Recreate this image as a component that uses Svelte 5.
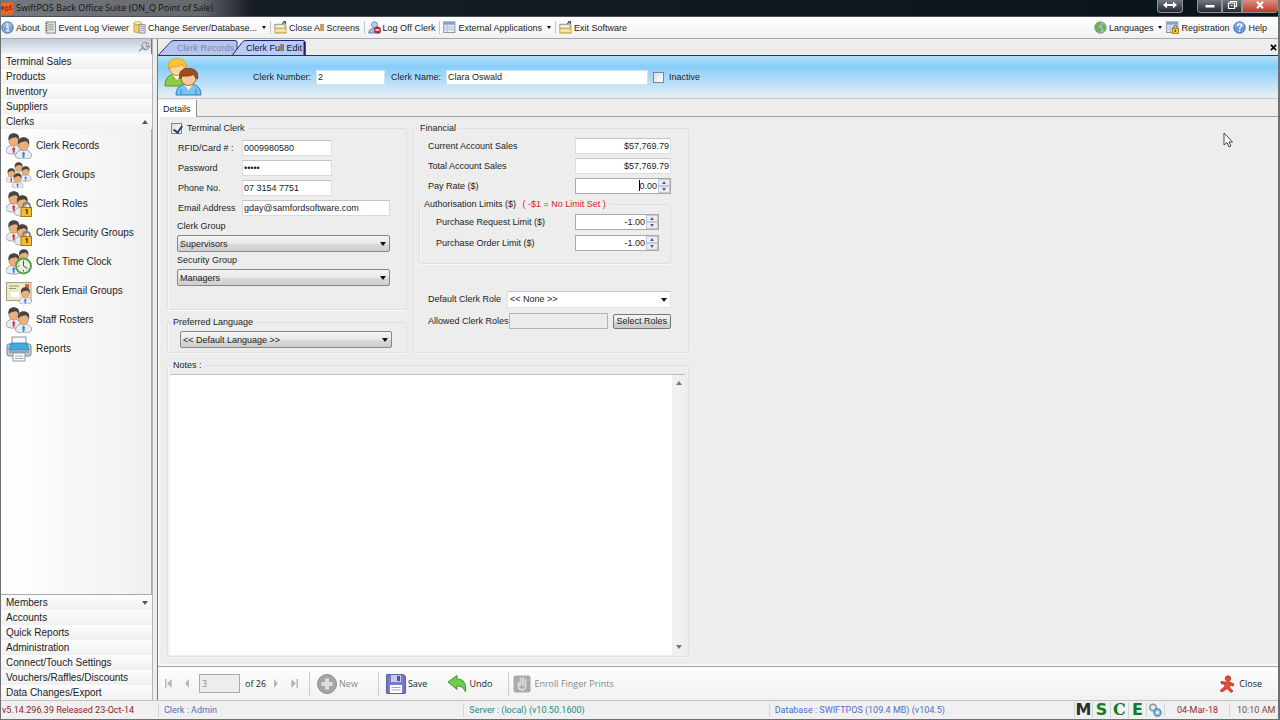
<script>
	let clerk = $state({
		number: '2',
		name: 'Clara Oswald',
		inactive: false,
		terminal: true,
		card: '0009980580',
		password: '12345',
		phone: '07 3154 7751',
		email: 'gday@samfordsoftware.com',
		payRate: '0.00',
		requestLimit: '-1.00',
		orderLimit: '-1.00',
		notes: ''
	});

	const topSections = ['Terminal Sales', 'Products', 'Inventory', 'Suppliers', 'Clerks'];
	const bottomSections = [
		'Members',
		'Accounts',
		'Quick Reports',
		'Administration',
		'Connect/Touch Settings',
		'Vouchers/Raffles/Discounts',
		'Data Changes/Export'
	];
	const clerkItems = [
		{ label: 'Clerk Records', icon: 'pair' },
		{ label: 'Clerk Groups', icon: 'group' },
		{ label: 'Clerk Roles', icon: 'lock' },
		{ label: 'Clerk Security Groups', icon: 'lock' },
		{ label: 'Clerk Time Clock', icon: 'clock' },
		{ label: 'Clerk Email Groups', icon: 'mail' },
		{ label: 'Staff Rosters', icon: 'pair' },
		{ label: 'Reports', icon: 'printer' }
	];
	const menuLeft = [
		{ label: 'About', icon: 'info' },
		{ label: 'Event Log Viewer', icon: 'log' },
		{ label: 'Change Server/Database...', icon: 'database', arrow: true, sep: true },
		{ label: 'Close All Screens', icon: 'folder', sep: true },
		{ label: 'Log Off Clerk', icon: 'logoff', sep: true },
		{ label: 'External Applications', icon: 'window', arrow: true, sep: true },
		{ label: 'Exit Software', icon: 'folder' }
	];
	const menuRight = [
		{ label: 'Languages', icon: 'globe', arrow: true },
		{ label: 'Registration', icon: 'register' },
		{ label: 'Help', icon: 'help' }
	];

	function step(field, amount) {
		clerk[field] = (parseFloat(clerk[field]) + amount).toFixed(2);
	}
</script>

{#snippet person(x, y, s, tie)}
	<g transform="translate({x} {y}) scale({s})">
		<path d="M0 17c0-4 3-6 7-6s7 2 7 6c-2 3-12 3-14 0z" fill="#e8edf3" stroke="#8b929c" stroke-width=".7" />
		<path d="M4.500 11.300 7 14l2.500-2.700z" fill="#fff" />
		<path d="m7 12.500 1.200 1.500-.6 4.500H6.400L5.800 14z" fill={tie} />
		<ellipse cx="7" cy="7" rx="4.300" ry="5" fill="#e9b07c" stroke="#9c6c43" stroke-width=".5" />
		<path d="M2.400 7C1.300 2.500 4 .3 7 .3S13 2 11.700 7C11 5 10 4 8.500 3.800 6 4.500 3.500 4.500 2.400 7z" fill="#484541" />
	</g>
{/snippet}

{#snippet menuIcon(name)}
	<svg class="menu-icon" viewBox="0 0 14 14" aria-hidden="true">
		{#if name === 'info' || name === 'help'}
			<circle cx="7" cy="7" r="6.300" fill={name === 'info' ? '#7ba2d3' : '#6f96dd'} stroke="#48699f" stroke-width=".8" />
			<path d="M2 6a5 4.500 0 0 1 10 0z" fill="#fff" opacity=".25" />
			{#if name === 'info'}
				<path d="M5.500 6h2v4.500M5 10.700h4" stroke="#fff" stroke-width="1.200" fill="none" />
				<circle cx="7" cy="3.500" r="1" fill="#fff" />
			{:else}
				<path d="M4.800 5.400c0-3 4.500-3 4.500-.4C9.300 6.600 7 6.500 7 8.600" stroke="#fff" stroke-width="1.400" fill="none" />
				<circle cx="7" cy="10.700" r=".9" fill="#fff" />
			{/if}
		{:else if name === 'log'}
			<rect x="2.500" y="1" width="10" height="12" fill="#e5ebe3" stroke="#77857a" />
			<path d="M4.500 3.500h6M4.500 5.500h6M4.500 7.500h6M4.500 9.500h6" stroke="#8c9a8a" />
			<path d="M1 2.500h3M1 5h3M1 7.500h3M1 10h3" stroke="#666" stroke-width=".8" />
		{:else if name === 'database'}
			<path d="M1 2v9c0 2 8 2 8 0V2z" fill="#f1ce69" stroke="#b58829" stroke-width=".7" />
			<ellipse cx="5" cy="2.300" rx="4" ry="1.600" fill="#fff0b5" stroke="#b58829" stroke-width=".7" />
			<rect x="6.500" y="4" width="6.500" height="9" fill="#dfe3e8" stroke="#777" stroke-width=".8" />
			<path d="M8 6h4M8 8h4M8 10h4" stroke="#838c99" stroke-width=".8" />
		{:else if name === 'folder'}
			<path d="M1 3.500h8V2h3v3h1v8H1z" fill="#f5d36b" stroke="#a18442" stroke-width=".8" />
			<path d="M1 4h11v3.500H1z" fill="#f2f4f6" stroke="#8e9297" stroke-width=".7" />
			<path d="M1 10.500h12" stroke="#fff2ae" stroke-width="1.500" />
			<path d="m9 3 3-2.500M10 .5h2.500V3" stroke="#283b68" fill="none" />
		{:else if name === 'logoff'}
			<circle cx="7" cy="4" r="3.200" fill="#bacff0" stroke="#456aad" stroke-width=".8" />
			<path d="M.8 13c0-4 3-5 6.200-5s6 1 6 5z" fill="#9fbce8" stroke="#456aad" stroke-width=".8" />
			<circle cx="10.200" cy="9.700" r="3.500" fill="#cf2528" stroke="#8b1718" stroke-width=".5" />
			<path d="M8 9.700h4.400" stroke="#fff" stroke-width="1.500" />
		{:else if name === 'window' || name === 'register'}
			<rect x=".8" y="1" width="12" height="11.500" fill="#e9eef3" stroke="#71859f" stroke-width=".9" />
			<path d="M1 2.500h11.500" stroke="#7fa2d3" stroke-width="3" />
			<path d="M4.500 4v8M5.500 6.500h6M5.500 9h6M1.500 6.500h2M1.500 9h2" stroke="#98acc4" stroke-width=".9" />
			{#if name === 'register'}
				<path d="M8.300 8V6.500c0-2 3.400-2 3.400 0V8" stroke="#777" stroke-width="1.200" fill="none" />
				<rect x="6.700" y="7.800" width="6.800" height="5.600" fill="#f3c62f" stroke="#8d6a10" stroke-width=".8" />
				<path d="M10 9.300v2.500" stroke="#4b3807" stroke-width="1.200" />
			{/if}
		{:else if name === 'globe'}
			<circle cx="7" cy="7" r="6.200" fill="#9dbcd6" stroke="#52775b" stroke-width=".7" />
			<path d="M2 3c3-3 6-2 6 0S5 4 5 6s3 1 3 3-2 2-2 4C2 12 0 7 2 3zM9 4c3-1 4 2 4 4s-2 3-3 2 0-2-1-3-1-2 0-3z" fill="#6fae52" />
		{/if}
	</svg>
{/snippet}

{#snippet menu(items)}
	{#each items as item}
		<button class="menu-item" type="button">
			{@render menuIcon(item.icon)}
			<span>{item.label}</span>
			{#if item.arrow}<i class="arrow"></i>{/if}
		</button>
		{#if item.sep}<span class="menu-sep"></span>{/if}
	{/each}
{/snippet}

{#snippet sideIcon(name)}
	<svg class="side-icon" viewBox="0 0 26 26" aria-hidden="true">
		{#if name === 'pair'}
			{@render person(0, 0, 1.1, '#d8343b')}
			{@render person(9.5, 4, 1.15, '#3d8bd5')}
		{:else if name === 'group'}
			{@render person(7, 0, 0.8, '#d8a13b')}
			{@render person(0, 6, 0.75, '#d8343b')}
			{@render person(14, 4, 0.8, '#3d8bd5')}
			{@render person(6, 11, 0.8, '#3d8bd5')}
		{:else if name === 'lock'}
			{@render person(0, 0, 1.1, '#d8343b')}
			{@render person(8.5, 4, 1.1, '#3d8bd5')}
			<path d="M17 17v-2c0-4 7-4 7 0v2" stroke="#7d8288" stroke-width="1.800" fill="none" />
			<rect x="15" y="16.500" width="10.500" height="9" fill="#f1bd2e" stroke="#a57916" />
			<path d="M19.500 19h1.500v4" stroke="#463308" stroke-width="1.300" fill="none" />
		{:else if name === 'clock'}
			{@render person(11, 0, 0.95, '#3d8bd5')}
			{@render person(0, 4, 1.1, '#3d8bd5')}
			<circle cx="17.500" cy="17" r="7.500" fill="#e7eee0" stroke="#5a9c4d" stroke-width="2" />
			<path d="M17.500 11.500V17l4 2.500M12 17h1.500M17.500 21v1.500" stroke="#4a554a" fill="none" />
		{:else if name === 'mail'}
			<rect x=".5" y="4.500" width="24.500" height="18" fill="#eeeac4" stroke="#a2a17b" />
			<path d="M3 8h10M3 10.500h7" stroke="#8a9a7b" />
			<rect x="5" y="14" width="8" height="5" fill="#fff" />
			<rect x="19" y="6" width="4" height="4" fill="#dd6038" />
			{@render person(13, 9, 0.9, '#3d8bd5')}
		{:else}
			<rect x="6" y="1" width="14" height="9" fill="#f5f6f7" stroke="#8997a4" />
			<rect x="1" y="8" width="24" height="12" rx="2" fill="#c4cbd3" stroke="#738395" />
			<path d="M5 7h16l2 7H3z" fill="#43a8df" stroke="#277db1" stroke-width=".7" />
			<path d="M3 16h20" stroke="#6c7886" />
			<path d="M7 17h12v8H7z" fill="#fff" stroke="#8997a4" />
			<path d="M9 20h8M9 22.500h8" stroke="#9eabb8" />
		{/if}
	</svg>
{/snippet}

{#snippet spinner(id, field, label)}
	<div class="spinner">
		<input {id} bind:value={clerk[field]} />
		<span class="spin-buttons">
			<button type="button" aria-label="Increase {label}" onclick={() => step(field, 1)}><i class="arrow up"></i></button>
			<button type="button" aria-label="Decrease {label}" onclick={() => step(field, -1)}><i class="arrow"></i></button>
		</span>
		{#if field === 'payRate'}<i class="caret"></i>{/if}
	</div>
{/snippet}

<div class="window">
	<header class="titlebar">
		<svg class="logo" viewBox="0 0 12 12" aria-hidden="true">
			<rect width="12" height="12" rx="1" fill="#f0652b" />
			<path d="M1 8V4l2 1-2 1.500M4 7c0-3 3-4 3-1s-3 3-3 1M11 3C8 3 8 5 9.500 5S11 8 8 7" stroke="#651b12" fill="none" />
		</svg>
		<h1>SwiftPOS Back Office Suite (ON_Q Point of Sale)</h1>
		<div class="window-buttons">
			<button class="resize" type="button" aria-label="Switch display">
				<svg viewBox="0 0 14 8"><path d="M0 4l4-3.500V3h6V.5L14 4l-4 3.500V5H4v2.500z" fill="#fff" /></svg>
			</button>
			<button class="minimise" type="button" aria-label="Minimise">
				<svg viewBox="0 0 14 8"><path d="M2.500 4h9v2.500h-9z" fill="#fff" /></svg>
			</button>
			<button class="restore" type="button" aria-label="Restore">
				<svg viewBox="0 0 14 8"><path d="M5.500 2V.5h6v5H10M3.500 2h6v5.500h-6zM6 4.500h1.500" fill="none" stroke="#fff" stroke-width="1.200" /></svg>
			</button>
			<button class="shut" type="button" aria-label="Close window">
				<svg viewBox="0 0 14 8"><path d="m4 .8 6 6.400M10 .8 4 7.200" stroke="#fff" stroke-width="2" /></svg>
			</button>
		</div>
	</header>

	<nav class="menubar">
		{@render menu(menuLeft)}
		<span class="grow"></span>
		{@render menu(menuRight)}
	</nav>

	<div class="main">
		<aside class="sidebar">
			<div class="side-head">
				<button type="button" aria-label="Pin panel">
					<svg viewBox="0 0 14 12"><circle cx="8" cy="5" r="4" fill="#dde1e6" stroke="#8d939b" /><path d="M1 10.500 5 7M3.500 4.500l5 5M9 1.500v4h4" stroke="#8d939b" stroke-width="1.300" fill="none" /></svg>
				</button>
			</div>
			{#each topSections as section}
				<button class="section" type="button">
					{section}
					{#if section === 'Clerks'}<i class="arrow up"></i>{/if}
				</button>
			{/each}
			<div class="side-items">
				{#each clerkItems as item}
					<button type="button">
						{@render sideIcon(item.icon)}
						{item.label}
					</button>
				{/each}
			</div>
			{#each bottomSections as section}
				<button class="section" type="button">
					{section}
					{#if section === 'Members'}<i class="arrow"></i>{/if}
				</button>
			{/each}
		</aside>

		<main class="content">
			<div class="tabs">
				<button class="tab back" type="button">
					<svg viewBox="0 0 80 15" preserveAspectRatio="none"><path d="M.5 15 12 2.500Q13.500.5 16 .5h61q2 0 2 2V15" fill="#b5c5ef" stroke="#29376d" /></svg>
					<span>Clerk Records</span>
				</button>
				<button class="tab front" type="button">
					<svg viewBox="0 0 74 15" preserveAspectRatio="none"><path d="M.5 15 10 2.500Q11.500.5 14 .5h57q2 0 2 2V15" fill="#b9cbfa" stroke="#16236b" /><path d="M72.500 2v13" stroke="#16236b" stroke-width="2" /></svg>
					<span>Clerk Full Edit</span>
				</button>
				<span class="grow"></span>
				<button class="tab-close" type="button" aria-label="Close tab">
					<svg viewBox="0 0 8 8"><path d="m1 1 6 6M7 1 1 7" stroke="#000" stroke-width="1.900" /></svg>
				</button>
			</div>

			<div class="banner">
				<svg class="banner-icon" viewBox="0 0 38 38" aria-hidden="true">
					<path d="M1 28c0-8 4-12 11-12 8 0 11 4 11 12z" fill="#8dcb45" stroke="#5c9827" />
					<path d="m9 17 4 5 4-5z" fill="#fff" />
					<ellipse cx="13" cy="9.500" rx="7.500" ry="8" fill="#fbd5a1" stroke="#c9902b" />
					<path d="M4.500 11C3 3 8 .7 13.500.7S23.500 4 22 11c-2-1-3-3-4-5-3 3-8 3-11 3z" fill="#f8c63b" stroke="#cf9620" stroke-width=".8" />
					<path d="M12 37c0-8 5-11 12.500-11S37 29 37 37z" fill="#7bc2f1" stroke="#2c7fbb" />
					<path d="m20 26.500 4.500 5.500 4.500-5.500z" fill="#fff" />
					<path d="M17 31v6M32 31v6" stroke="#348bc8" />
					<ellipse cx="24.500" cy="20" rx="7.500" ry="7.500" fill="#fbc997" stroke="#a8602d" />
					<path d="M16 21c-2-8 3-10.500 8.500-10.500S35 13 33.500 21c-2-1-3-3-4-4.500-4 2-8 1.500-11 1.500z" fill="#9c4d24" stroke="#6b3013" stroke-width=".8" />
				</svg>
				<label for="number">Clerk Number:</label>
				<input id="number" class="number" bind:value={clerk.number} />
				<label for="name">Clerk Name:</label>
				<input id="name" class="name" bind:value={clerk.name} />
				<label class="check"><input type="checkbox" bind:checked={clerk.inactive} />Inactive</label>
			</div>

			<div class="subtabs"><button type="button">Details</button></div>

			<div class="page">
				<form class="form" onsubmit={(e) => e.preventDefault()}>
					<div class="groups">
						<div class="left">
							<fieldset class="terminal">
								<legend><label class="check"><input type="checkbox" bind:checked={clerk.terminal} />Terminal Clerk</label></legend>
								<div class="row"><label for="card">RFID/Card # :</label><input id="card" bind:value={clerk.card} /></div>
								<div class="row"><label for="password">Password</label><input id="password" type="password" bind:value={clerk.password} /></div>
								<div class="row"><label for="phone">Phone No.</label><input id="phone" bind:value={clerk.phone} /></div>
								<div class="row"><label for="email">Email Address</label><input id="email" class="wide" bind:value={clerk.email} /></div>
								<label class="above" for="group">Clerk Group</label>
								<div class="select"><select id="group"><option>Supervisors</option></select><i class="arrow"></i></div>
								<label class="above" for="security">Security Group</label>
								<div class="select"><select id="security"><option>Managers</option></select><i class="arrow"></i></div>
							</fieldset>
							<fieldset class="language">
								<legend><label for="language">Preferred Language</label></legend>
								<div class="select"><select id="language"><option>&lt;&lt; Default Language &gt;&gt;</option></select><i class="arrow"></i></div>
							</fieldset>
						</div>

						<fieldset class="financial">
							<legend>Financial</legend>
							<div class="row"><label for="current">Current Account Sales</label><input id="current" value="$57,769.79" readonly /></div>
							<div class="row"><label for="total">Total Account Sales</label><input id="total" value="$57,769.79" readonly /></div>
							<div class="row"><label for="pay">Pay Rate ($)</label>{@render spinner('pay', 'payRate', 'pay rate')}</div>
							<fieldset class="limits">
								<legend>Authorisation Limits ($) <span>( -$1 = No Limit Set )</span></legend>
								<div class="row"><label for="request">Purchase Request Limit ($)</label>{@render spinner('request', 'requestLimit', 'request limit')}</div>
								<div class="row"><label for="order">Purchase Order Limit ($)</label>{@render spinner('order', 'orderLimit', 'order limit')}</div>
							</fieldset>
							<div class="role">
								<label for="role">Default Clerk Role</label>
								<div class="select plain"><select id="role"><option>&lt;&lt; None &gt;&gt;</option></select><i class="arrow"></i></div>
							</div>
							<div class="role">
								<label for="allowed">Allowed Clerk Roles</label>
								<input id="allowed" disabled />
								<button type="button">Select Roles</button>
							</div>
						</fieldset>
					</div>

					<fieldset class="notes">
						<legend><label for="notes">Notes :</label></legend>
						<div class="notes-box">
							<textarea id="notes" bind:value={clerk.notes}></textarea>
							<div class="scroll"><i class="arrow up"></i><i class="arrow"></i></div>
						</div>
					</fieldset>
				</form>
			</div>

			<div class="actions">
				<button type="button" class="nav" aria-label="First record" disabled><svg viewBox="0 0 9 10"><path d="M1.500 0v10" stroke="#b4b4b4" stroke-width="1.500" /><path d="M8 0v10L3 5z" fill="#b4b4b4" /></svg></button>
				<button type="button" class="nav" aria-label="Previous record" disabled><svg viewBox="0 0 9 10"><path d="M6 0v10L2 5z" fill="#b4b4b4" /></svg></button>
				<input aria-label="Record" value="3" disabled />
				<span class="count">of 26</span>
				<button type="button" class="nav" aria-label="Next record" disabled><svg viewBox="0 0 9 10"><path d="M3 0v10l4-5z" fill="#b4b4b4" /></svg></button>
				<button type="button" class="nav" aria-label="Last record" disabled><svg viewBox="0 0 9 10"><path d="M7.500 0v10" stroke="#b4b4b4" stroke-width="1.500" /><path d="M1 0v10l5-5z" fill="#b4b4b4" /></svg></button>
				<span class="sep"></span>
				<button type="button" class="act new" disabled>
					<svg viewBox="0 0 20 20"><circle cx="10" cy="10" r="9.500" fill="#a5a5a5" stroke="#8e8e8e" /><path d="M10 4.500v11M4.500 10h11" stroke="#dedede" stroke-width="4" /></svg>New
				</button>
				<span class="sep"></span>
				<button type="button" class="act save">
					<svg viewBox="0 0 20 20"><path d="M.7.700h17L19.300 2.500v16.800H.7z" fill="#777bd2" stroke="#46498e" /><path d="M5 1h10v7H5z" fill="#c7cbe9" /><path d="M11 2h3v5h-3z" fill="#4d519a" /><path d="M4 11h12v8H4z" fill="#fff" /><path d="M5.500 13.500h9M5.500 16h9" stroke="#9ea5c9" /></svg>Save
				</button>
				<button type="button" class="act undo">
					<svg viewBox="0 0 20 20"><path d="M1 8 10 1.500V5c7 0 9.500 5 8.500 13-2-4.500-4-6-8.500-6v3.500z" fill="#6cce4c" stroke="#419530" /></svg>Undo
				</button>
				<span class="sep"></span>
				<button type="button" class="act enroll" disabled>
					<svg viewBox="0 0 20 20"><rect x="1.500" y="1.500" width="17" height="17" rx="2" fill="#aaa" /><path d="M6.500 9v3c0 5 7 5 7 0V6M8.500 11V4.500M11 11V4" stroke="#ddd" stroke-width="1.800" fill="none" stroke-linecap="round" /></svg>Enroll Finger Prints
				</button>
				<span class="grow"></span>
				<button type="button" class="act close">
					<svg viewBox="0 0 16 18"><circle cx="9" cy="3.500" r="2.700" fill="#ea4a32" stroke="#a92517" stroke-width=".7" /><path d="M2 6.500l5 .5h4l4 2-.8 2-3.700-1 .5 3 3 3-2 1.500L8 13.500 3 17 1 15.500 5.500 12 6 9.500l-4-1z" fill="#ea4a32" stroke="#a92517" stroke-width=".7" /></svg>Close
				</button>
			</div>
		</main>
	</div>

	<footer class="status">
		<span class="version">v5.14.296.39 Released 23-Oct-14</span>
		<span class="cell user">Clerk : Admin</span>
		<span class="cell server">Server : (local) (v10.50.1600)</span>
		<span class="cell db">Database : SWIFTPOS (109.4 MB) (v104.5)</span>
		<span class="flag m">M</span>
		<span class="flag">S</span>
		<span class="flag serif">C</span>
		<span class="flag">E</span>
		<span class="flag">
			<svg viewBox="0 0 14 14" aria-hidden="true"><circle cx="5" cy="4.500" r="3.200" fill="#e3e6ea" stroke="#8d97a2" stroke-width="1.500" /><circle cx="9.500" cy="9.500" r="3.600" fill="#8fc3ed" stroke="#4482bd" stroke-width="1.200" /><circle cx="9.500" cy="9.500" r="1.300" fill="#fff" /></svg>
		</span>
		<span class="date">04-Mar-18</span>
		<span class="time">10:10 AM</span>
	</footer>

	<svg class="pointer" viewBox="0 0 10 16" aria-hidden="true"><path d="M1 1v12l3-2.500L6 15l2-1-2-4h3.500z" fill="#fff" stroke="#333" stroke-width=".9" /></svg>
</div>

<style>
	:global(body) {
		margin: 0;
	}

	.window, .window * {
		box-sizing: border-box;
	}

	.window {
		position: relative;
		display: flex;
		flex-direction: column;
		min-height: 100vh;
		background: #ededed;
		border: solid #6c6f73;
		border-width: 0 2px 1px 1px;
		font: 9px/12px "Liberation Sans", Arial, sans-serif;
		color: #1c1c1c;
	}

	button, input, select, textarea {
		font: inherit;
		color: inherit;
		margin: 0;
	}

	label {
		white-space: nowrap;
	}

	button {
		display: flex;
		align-items: center;
		padding: 0;
		border: 0;
		background: none;
		white-space: nowrap;
	}

	input, textarea {
		min-width: 0;
		border: 1px solid #dcdcdc;
		border-top-color: #c4c4c4;
		border-radius: 0;
		background: #fff;
		padding: 0 1px;
		outline: none;
	}

	svg {
		display: block;
		flex-shrink: 0;
	}

	.grow {
		flex: 1;
	}

	.arrow {
		width: 0;
		height: 0;
		border: 3px solid transparent;
		border-top: 4px solid #111;
		border-bottom: 0;
	}

	.arrow.up {
		border-top: 0;
		border-bottom: 4px solid #555;
	}

	/* title bar */
	.titlebar {
		display: flex;
		align-items: center;
		height: 17px;
		background: linear-gradient(90deg, #75797d, #65696d 200px, #161d24 250px, #0b131b);
		border-bottom: 1px solid #4a4e55;
	}

	.logo {
		width: 12px;
		height: 13px;
	}

	h1 {
		flex: 1;
		margin: 0 0 0 3px;
		font: 9px/14px "Open Sans", "Noto Sans", sans-serif;
		color: #101010;
	}

	.window-buttons {
		display: flex;
		align-self: flex-start;
	}

	.window-buttons button {
		height: 13px;
		justify-content: center;
		padding-bottom: 2px;
		border: 1px solid #8f9499;
		border-top: 0;
		background: linear-gradient(#73787e, #24292f);
	}

	.window-buttons svg {
		width: 14px;
		height: 8px;
	}

	.window-buttons .resize {
		width: 26px;
		margin-right: 14px;
		border-radius: 0 0 4px 4px;
	}

	.window-buttons .minimise {
		width: 25px;
		border-radius: 0 0 0 4px;
	}

	.window-buttons .restore {
		width: 20px;
	}

	.window-buttons .shut {
		width: 36px;
		background: linear-gradient(#d79081, #bd3a22);
		border-radius: 0 0 4px 0;
	}

	/* menu bar */
	.menubar {
		display: flex;
		align-items: center;
		height: 22px;
		padding-right: 11px;
		background: linear-gradient(#fff, #f1f1f1);
		border-bottom: 1px solid #a9a9a9;
	}

	.menu-item {
		gap: 2px;
		margin-right: 4px;
	}

	.menu-item:last-child {
		margin-right: 0;
	}

	.menu-icon {
		width: 13px;
		height: 13px;
	}

	.menu-item .arrow {
		margin-left: 3px;
		border-width: 3px 2px 0;
	}

	.menu-sep {
		width: 1px;
		height: 13px;
		margin-right: 3px;
		background: #c6c6c6;
	}

	/* sidebar */
	.main {
		display: flex;
		flex: 1;
	}

	.sidebar {
		display: flex;
		flex-direction: column;
		width: 152px;
		margin-right: 4px;
		font-size: 10px;
		border-right: 1px solid #b5b5b5;
	}

	.side-head {
		display: flex;
		justify-content: flex-end;
		align-items: center;
		height: 15px;
		background: linear-gradient(#c3ccdb, #f0f4f9);
		border-right: 1px solid #777;
	}

	.side-head svg {
		width: 13px;
		height: 12px;
	}

	.section {
		justify-content: space-between;
		height: 15px;
		padding: 0 4px 0 5px;
		background: linear-gradient(#fdfdfd, #f0f0f0);
	}

	.section .arrow {
		border-top-color: #555;
	}

	.side-items {
		flex: 1;
		padding: 2px 0 0 5px;
		background: linear-gradient(90deg, #fff, #f0f0f0);
		border-right: 1px solid #aaa;
		border-bottom: 1px solid #aaa;
	}

	.side-items button {
		height: 29px;
		gap: 4px;
	}

	.side-icon {
		width: 26px;
		height: 26px;
	}

	/* content */
	.content {
		display: flex;
		flex-direction: column;
		flex: 1;
		min-width: 0;
		border-left: 1px solid #777;
	}

	.tabs {
		display: flex;
		align-items: flex-end;
		height: 17px;
		padding-right: 1px;
		border-bottom: 1px solid #30343c;
	}

	.tab {
		position: relative;
		height: 15px;
		padding-right: 4px;
	}

	.tab svg {
		position: absolute;
		inset: 0;
		width: 100%;
		height: 100%;
	}

	.tab span {
		position: relative;
		flex: 1;
		text-align: right;
	}

	.tab.back {
		width: 80px;
		color: #7c86a5;
	}

	.tab.front {
		width: 74px;
		margin-left: -6px;
		color: #10102c;
	}

	.tab-close {
		align-self: center;
	}

	.tab-close svg {
		width: 7px;
		height: 7px;
	}

	.banner {
		display: flex;
		align-items: center;
		height: 43px;
		padding-left: 6px;
		background: linear-gradient(#b9e0f8, #86cdfa 25%, #dcebf5 90%, #e6eef4);
		border-bottom: 1px solid #c3cad0;
	}

	.banner-icon {
		width: 38px;
		height: 38px;
		margin-right: 51px;
	}

	.banner input {
		height: 15px;
		border-color: #d4e4ee;
	}

	.banner .number {
		width: 69px;
		margin: 0 6px 0 5px;
	}

	.banner .name {
		width: 202px;
		margin: 0 5px;
	}

	.check {
		display: flex;
		align-items: center;
		gap: 5px;
	}

	.check input, .banner .check input {
		appearance: none;
		width: 11px;
		height: 11px;
		padding: 0;
		border: 1px solid #7f8690;
		background: linear-gradient(135deg, #dadde1, #fff);
	}

	.check input:checked::after {
		content: "";
		display: block;
		width: 4px;
		height: 7px;
		margin: 0 0 0 3px;
		border: solid #2f3d73;
		border-width: 0 2px 2px 0;
		transform: rotate(35deg);
	}

	.subtabs {
		display: flex;
		align-items: flex-end;
		height: 18px;
		border-bottom: 1px solid #a2a59f;
	}

	.subtabs button {
		height: 17px;
		margin-bottom: -1px;
		padding: 0 5px;
		border-right: 1px solid #8e8e8e;
		background: #fff;
	}

	.page {
		display: flex;
		flex: 1;
		padding: 5px 0 7px 7px;
		border: solid #f8f8f8;
		border-width: 0 0 2px 2px;
	}

	.form {
		display: flex;
		flex-direction: column;
		width: 522px;
	}

	.groups {
		display: flex;
		gap: 6px;
	}

	.left {
		flex: 1;
		display: flex;
		flex-direction: column;
	}

	fieldset {
		min-width: 0;
		margin: 0;
		padding: 0;
		border: 1px solid #e0e0e0;
		border-radius: 2px;
		box-shadow: inset 1px 0 #f6f6f6, 0 1px #f8f8f8;
	}

	legend {
		height: 12px;
		margin-left: 3px;
		padding: 0 3px 0 2px;
	}

	.row {
		display: flex;
		align-items: center;
		height: 20px;
	}

	.row input {
		height: 16px;
	}

	.terminal {
		padding: 4px 16px 23px 9px;
	}

	.terminal legend {
		margin-left: -8px;
	}

	.terminal .row label {
		width: 65px;
		padding-left: 1px;
	}

	.terminal .row input {
		width: 90px;
	}

	.terminal .row .wide {
		width: 148px;
	}

	.above {
		display: block;
		line-height: 17px;
	}

	.select {
		position: relative;
	}

	.select select {
		appearance: none;
		display: block;
		width: 100%;
		height: 17px;
		padding: 0 2px;
		border: 1px solid #878787;
		border-radius: 2px;
		background: linear-gradient(#f3f3f3, #e9e9e9 50%, #dadada 52%, #cfcfcf);
	}

	.select .arrow {
		position: absolute;
		right: 4px;
		top: 7px;
		pointer-events: none;
	}

	.select.plain {
		width: 164px;
	}

	.select.plain select {
		border-color: #c4c4c4 #e2e2e2 #e2e2e2;
		border-radius: 0;
		background: #fff;
	}

	.language {
		margin-top: 6px;
		padding: 3px 14px 4px 12px;
	}

	.language legend {
		margin-left: -9px;
	}

	.financial {
		width: 277px;
		padding: 2px 17px 0 5px;
	}

	.financial > legend {
		margin-left: -1px;
	}

	.financial .row label {
		flex: 1;
		padding-left: 9px;
	}

	.financial .row > input {
		width: 96px;
		text-align: right;
	}

	.spinner {
		position: relative;
		display: flex;
		width: 96px;
		height: 16px;
		border: 1px solid #a9a9a9;
		background: #fff;
	}

	.spinner input {
		flex: 1;
		height: 14px;
		border: 0;
		text-align: right;
	}

	.spin-buttons {
		display: flex;
		flex-direction: column;
		width: 12px;
	}

	.spin-buttons button {
		flex: 1;
		justify-content: center;
		border: 1px solid #c4c8d2;
		background: #eceef3;
	}

	.spin-buttons .arrow {
		border-width: 0 2px 3px;
		border-bottom-color: #56617f;
	}

	.spin-buttons .arrow:not(.up) {
		border-width: 3px 2px 0;
		border-top-color: #56617f;
	}

	.caret {
		position: absolute;
		top: 1px;
		right: 30px;
		width: 1px;
		height: 11px;
		background: #000;
	}

	.limits {
		margin-top: 2px;
		padding: 1px 11px 10px 7px;
	}

	.limits legend {
		margin-left: -5px;
	}

	.limits legend span {
		margin-left: 4px;
		color: #d8202c;
	}

	.limits .row {
		height: 21px;
	}

	.limits .spinner {
		width: 84px;
	}

	.role {
		display: flex;
		align-items: center;
		height: 22px;
		padding-left: 9px;
	}

	.limits + .role {
		margin-top: 24px;
	}

	.role label {
		flex: 1;
	}

	.role input {
		width: 100px;
		height: 16px;
		margin-right: 5px;
		border-color: #b4b4b4;
		background: #ebebeb;
	}

	.role button {
		justify-content: center;
		width: 59px;
		height: 15px;
		border: 1px solid #777;
		border-radius: 2px;
		background: linear-gradient(#f2f2f2, #e6e6e6 50%, #d4d4d4 52%, #cbcbcb);
	}

	.notes {
		display: flex;
		flex-direction: column;
		flex: 1;
		margin-top: 6px;
		padding: 3px 3px 1px 2px;
	}

	.notes legend {
		margin-left: 1px;
	}

	.notes-box {
		display: flex;
		flex: 1;
		height: 100%;
		border-top: 1px solid #bdbdbd;
	}

	textarea {
		flex: 1;
		resize: none;
		border: 0;
	}

	.scroll {
		display: flex;
		flex-direction: column;
		justify-content: space-between;
		align-items: center;
		width: 13px;
		padding: 6px 0;
		background: #f0f0f0;
	}

	.scroll .arrow {
		border-top-color: #777;
		border-bottom-color: #777;
	}

	/* record actions */
	.actions {
		display: flex;
		align-items: center;
		height: 34px;
		padding: 0 16px 0 6px;
		border-top: 1px solid #a4a4a4;
		background: linear-gradient(#fefefe, #f1f1f1);
		font: 9px/14px "Open Sans", "Noto Sans", sans-serif;
	}

	.nav {
		margin-right: 10px;
	}

	.nav svg {
		width: 9px;
		height: 9px;
	}

	.actions input {
		width: 41px;
		height: 19px;
		margin: 0 5px 0 -3px;
		padding: 0 2px;
		border-color: #aaa;
		background: #ededed;
		color: #8c8c8c;
	}

	.count {
		margin-right: 5px;
	}

	.sep {
		width: 1px;
		height: 24px;
		background: #cdcdcd;
	}

	.act {
		gap: 2px;
	}

	.act svg {
		width: 20px;
		height: 20px;
	}

	.act:disabled {
		color: #868686;
	}

	.new {
		margin: 0 20px 0 7px;
	}

	.save {
		margin: 0 20px 0 7px;
	}

	.undo {
		margin-right: 16px;
	}

	.enroll {
		margin-left: 3px;
	}

	.close {
		gap: 4px;
	}

	.act.close svg {
		width: 16px;
		height: 18px;
	}

	/* status bar */
	.status {
		display: flex;
		align-items: center;
		height: 19px;
		border-top: 1px solid #c2c2c2;
		background: #f0f0f0;
		font: 9px/14px Roboto, "Liberation Sans", sans-serif;
	}

	.version {
		width: 157px;
		padding-left: 1px;
		color: #8f1c1c;
	}

	.cell {
		flex: 1;
		padding-left: 5px;
		border-left: 1px solid #d4d4d4;
	}

	.user {
		color: #4d6fc6;
	}

	.server {
		color: #1d8a83;
	}

	.db {
		color: #4d6fc6;
	}

	.flag {
		display: flex;
		justify-content: center;
		width: 18px;
		border-left: 1px solid #d4d4d4;
		font: bold 16px/16px "DejaVu Sans", sans-serif;
		color: #157a25;
	}

	.flag.m {
		color: #2d2d2d;
	}

	.flag.serif {
		font-family: "DejaVu Serif", serif;
	}

	.flag svg {
		width: 14px;
		height: 14px;
	}

	.date, .time {
		padding-left: 12px;
		border-left: 1px solid #d4d4d4;
		color: #8f2c2c;
		white-space: nowrap;
	}

	.date {
		width: 65px;
	}

	.time {
		width: 49px;
		padding-left: 7px;
		color: #7c4c2c;
	}

	.pointer {
		position: absolute;
		left: 1222px;
		top: 132px;
		width: 10px;
		height: 16px;
	}
</style>
